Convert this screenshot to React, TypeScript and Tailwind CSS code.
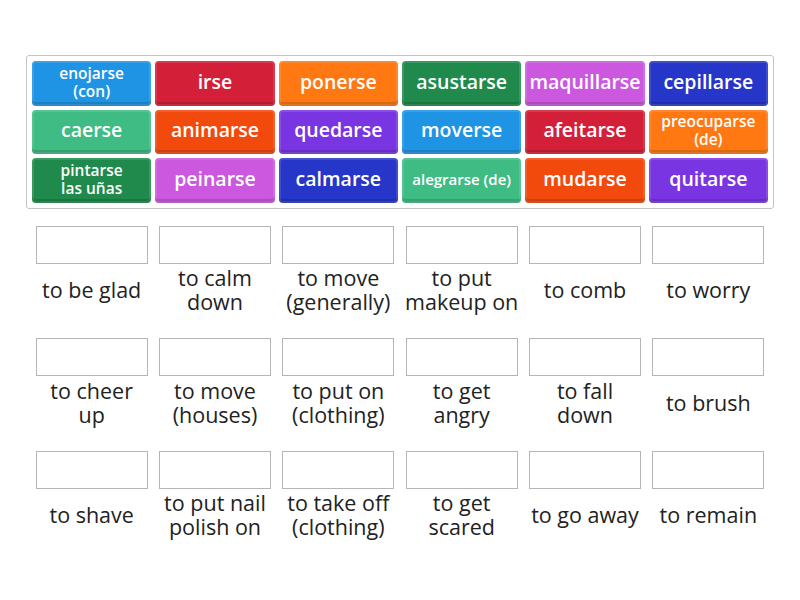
import React from 'react';

const tiles: { label: string[]; color: string; size: 'lg' | 'sm' | 'xs' }[] = [
  { label: ['enojarse', '(con)'], color: 'bg-[#1f94e4]', size: 'sm' },
  { label: ['irse'], color: 'bg-[#d41f38]', size: 'lg' },
  { label: ['ponerse'], color: 'bg-[#ff7812]', size: 'lg' },
  { label: ['asustarse'], color: 'bg-[#1f8a4c]', size: 'lg' },
  { label: ['maquillarse'], color: 'bg-[#cb58df]', size: 'lg' },
  { label: ['cepillarse'], color: 'bg-[#2536c9]', size: 'lg' },
  { label: ['caerse'], color: 'bg-[#3fbb84]', size: 'lg' },
  { label: ['animarse'], color: 'bg-[#f2490d]', size: 'lg' },
  { label: ['quedarse'], color: 'bg-[#7a35e2]', size: 'lg' },
  { label: ['moverse'], color: 'bg-[#1f94e4]', size: 'lg' },
  { label: ['afeitarse'], color: 'bg-[#d41f38]', size: 'lg' },
  { label: ['preocuparse', '(de)'], color: 'bg-[#ff7812]', size: 'sm' },
  { label: ['pintarse', 'las uñas'], color: 'bg-[#1f8a4c]', size: 'sm' },
  { label: ['peinarse'], color: 'bg-[#cb58df]', size: 'lg' },
  { label: ['calmarse'], color: 'bg-[#2536c9]', size: 'lg' },
  { label: ['alegrarse (de)'], color: 'bg-[#3fbb84]', size: 'xs' },
  { label: ['mudarse'], color: 'bg-[#f2490d]', size: 'lg' },
  { label: ['quitarse'], color: 'bg-[#7a35e2]', size: 'lg' },
];

// each answer split into the lines the reference shows
const answers: string[][][] = [
  [['to be glad'], ['to calm', 'down'], ['to move', '(generally)'], ['to put', 'makeup on'], ['to comb'], ['to worry']],
  [['to cheer', 'up'], ['to move', '(houses)'], ['to put on', '(clothing)'], ['to get', 'angry'], ['to fall', 'down'], ['to brush']],
  [['to shave'], ['to put nail', 'polish on'], ['to take off', '(clothing)'], ['to get', 'scared'], ['to go away'], ['to remain']],
];

const sizeClass = {
  lg: 'text-[19.5px] leading-[22px]',
  sm: 'text-[15.5px] leading-[18px]',
  xs: 'text-[15px] leading-[18px]',
};

function Lines({ lines }: { lines: string[] }) {
  return (
    <>
      {lines.map((l, i) => (
        <React.Fragment key={l}>
          {i > 0 && <br />}
          {l}
        </React.Fragment>
      ))}
    </>
  );
}

export default function App() {
  return (
    <div className="w-[800px] h-[600px] bg-white font-['Open_Sans',sans-serif]">
      {/* tile bank */}
      <div className="pt-[55px] px-[26px]">
        <div className="w-[748px] border border-[#c4c4c4] rounded-[3px] p-[5px] grid grid-cols-6 gap-[4px]">
          {tiles.map((t) => (
            <div
              key={t.label.join(' ')}
              className={`${t.color} ${sizeClass[t.size]} h-[44.5px] rounded-[4px] flex items-center justify-center text-center text-white font-semibold whitespace-nowrap shadow-[inset_0_-4px_0_rgba(0,0,0,0.14),inset_0_0_0_2px_rgba(255,255,255,0.12)]`}
            >
              <p className="-mt-[3px]">
                <Lines lines={t.label} />
              </p>
            </div>
          ))}
        </div>
      </div>

      {/* answer slots */}
      <div className="pt-[17px] px-[30px] flex flex-col">
        {answers.map((row, i) => (
          <div key={i} className="grid grid-cols-6 h-[112.5px]">
            {row.map((a) => (
              <div key={a.join(' ')} className="flex flex-col items-center">
                <div className="w-[112px] h-[38px] border border-[#b5b5b5] bg-white" />
                <div className="h-[53px] flex items-center justify-center">
                  <p className="text-center text-[21.5px] leading-[24px] text-[#222] whitespace-nowrap">
                    <Lines lines={a} />
                  </p>
                </div>
              </div>
            ))}
          </div>
        ))}
      </div>
    </div>
  );
}
